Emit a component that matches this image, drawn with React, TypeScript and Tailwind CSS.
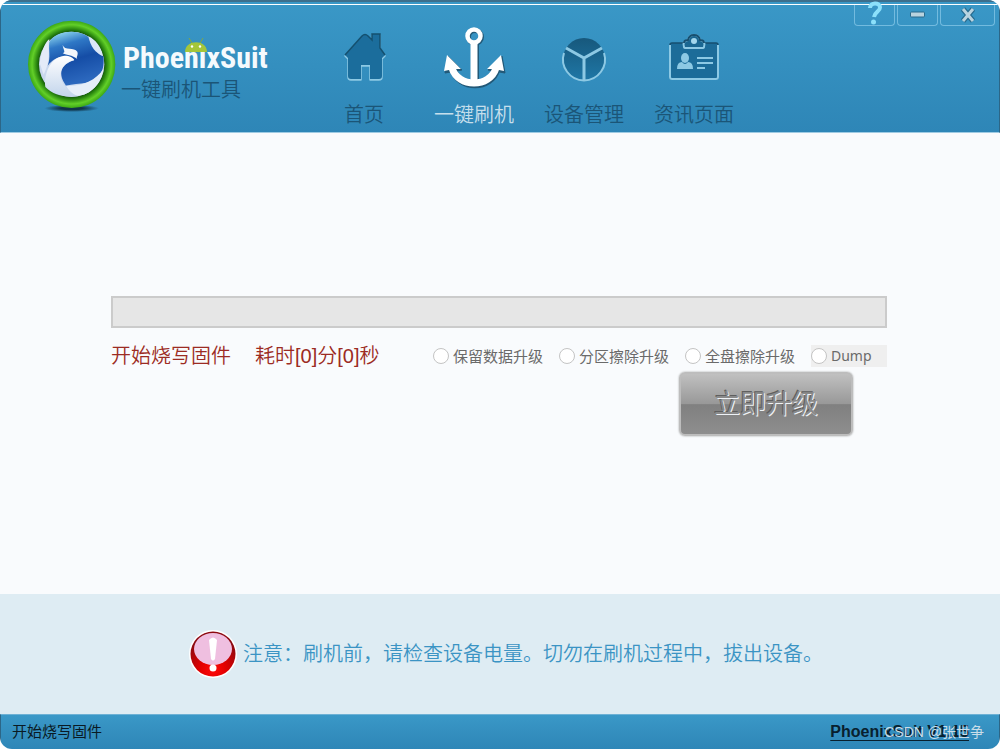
import { useState } from "react";
import type { ReactNode } from "react";

const navItems = [
  { id: "home", label: "首页", icon: <HomeIcon /> },
  { id: "flash", label: "一键刷机", icon: <AnchorIcon /> },
  { id: "device", label: "设备管理", icon: <DeviceIcon /> },
  { id: "news", label: "资讯页面", icon: <NewsIcon /> },
];

const modes = [
  { id: "keep", label: "保留数据升级" },
  { id: "partition", label: "分区擦除升级" },
  { id: "full", label: "全盘擦除升级" },
];

export default function App() {
  const [page, setPage] = useState("flash");
  const [mode, setMode] = useState("");

  return (
    <div className="flex min-h-screen flex-col overflow-hidden rounded-xl bg-[#f9fbfd] font-['Liberation_Sans','Noto_Sans_CJK_SC',sans-serif]">
      <header className="border-x border-b border-x-[#2c6687] border-b-[#9fcbe3] bg-linear-to-b from-[#3a98c7] to-[#2e86b7]">
        <div className="h-[5px] border-t-2 border-b border-t-[#3d6f8c] border-b-white" />
        <div className="flex items-start pl-[26px] pr-1">
          <div className="flex w-[297px] shrink-0 pt-[13px]">
            <LogoIcon />
            <div className="pl-1 pt-5">
              <div className="relative w-fit">
                <h1 className="pl-[2px] font-['Roboto_Condensed','Liberation_Sans_Narrow',sans-serif] text-[30px] font-bold leading-[40px] text-[#f5fafd]">
                  PhoenixSuit
                </h1>
                <AndroidIcon />
              </div>
              <p className="text-[20px] font-[350] leading-6 text-[#1b5577]">
                一键刷机工具
              </p>
            </div>
          </div>

          <nav className="flex gap-[30px] pb-1 pt-[21px]">
            {navItems.map((item) => (
              <button
                key={item.id}
                onClick={() => setPage(item.id)}
                className={`flex w-20 flex-col items-center gap-3 text-[20px] font-[350] leading-[26px] ${
                  page === item.id ? "text-[#c6dfec]" : "text-[#1b5577]"
                }`}
              >
                {item.icon}
                {item.label}
              </button>
            ))}
          </nav>

          <div className="ml-auto flex gap-[2px]">
            <WindowButton label="帮助" className="w-[41px]">
              <svg viewBox="0 0 16 24" className="absolute bottom-0 h-6 w-4" fill="none">
                <path d="M3 7 C3 1 13 1 13 6.500 C13 10.500 8 10.500 7 16" stroke="#8be0fa" strokeWidth="4" />
                <circle cx="6.500" cy="21" r="2.500" fill="#8be0fa" />
              </svg>
            </WindowButton>
            <WindowButton label="最小化" className="w-[41px]">
              <svg viewBox="0 0 18 8" className="h-2 w-[18px]">
                <rect x="1.500" y="1" width="14" height="5" rx="1" fill="#b9d3df" stroke="#286b8e" />
              </svg>
            </WindowButton>
            <WindowButton label="关闭" className="w-[55px]">
              <svg viewBox="0 0 18 18" className="h-[18px] w-[18px]" fill="none">
                <path d="M4 3 L14 15 M14 3 L4 15" stroke="#286b8e" strokeWidth="5.500" />
                <path d="M4 3 L14 15 M14 3 L4 15" stroke="#b9d3df" strokeWidth="3" />
              </svg>
            </WindowButton>
          </div>
        </div>
      </header>

      <main className="flex flex-1 flex-col justify-center pl-[111px] pr-[113px] pt-[5px]">
        <div
          role="progressbar"
          aria-label="升级进度"
          aria-valuenow={0}
          className="h-8 border-2 border-[#cbcbcb] bg-[#e6e6e6]"
        />
        <div className="mt-4 flex h-6 items-center whitespace-nowrap">
          <p className="flex gap-6 text-[20px] font-[350] text-[#9c2b23]">
            <span>开始烧写固件</span>
            <span>耗时[0]分[0]秒</span>
          </p>
          <div className="ml-auto flex items-center gap-4 text-[15px] text-[#6a6a6a]">
            {modes.map((m) => (
              <ModeOption key={m.id} {...m} value={mode} onSelect={setMode} />
            ))}
            <div className="w-[76px] bg-[#efefef] text-[14px]">
              <ModeOption id="dump" label="Dump" value={mode} onSelect={setMode} />
            </div>
          </div>
        </div>
        <button className="mr-[34px] mt-1 h-16 w-[174px] self-end rounded-md border-2 border-[#bdbdbd] bg-[linear-gradient(#c0c0c0,#989898_50%,#808080_51%,#8e8e8e)] text-[26px] text-[#8a8a8a] shadow-[0_0_2px_#999] [text-shadow:1px_1px_0_#eef2f6,-1px_-1px_0_#5f5f5f]">
          立即升级
        </button>
      </main>

      <section className="flex h-[120px] items-center justify-center gap-[6px] bg-[#deecf3] pl-3">
        <WarningIcon />
        <p className="text-[20px] font-[350] text-[#3b94c4]">
          注意：刷机前，请检查设备电量。切勿在刷机过程中，拔出设备。
        </p>
      </section>

      <footer className="relative flex h-[35px] items-center justify-between border-x border-t border-x-[#2c6687] border-t-[#6db1d5] bg-linear-to-b from-[#3a98c7] to-[#2e86b7] pl-[11px] pr-[30px]">
        <span className="text-[15px] text-[#0a1a24]">开始烧写固件</span>
        <a href="#" className="text-[16px] font-bold text-[#08202e] underline underline-offset-3">
          PhoenixSuit V1.15
        </a>
        <span className="absolute right-[15px] text-[14px] text-[#c9dde8]">
          CSDN @张世争
        </span>
      </footer>
    </div>
  );
}

function ModeOption({ id, label, value, onSelect }: { id: string; label: string; value: string; onSelect: (id: string) => void }) {
  return (
    <label className="flex items-center gap-1 font-['Noto_Sans','Noto_Sans_CJK_SC',sans-serif] leading-[22px]">
      <input
        type="radio"
        name="mode"
        value={id}
        checked={value === id}
        onChange={() => onSelect(id)}
        className="h-4 w-4 appearance-none rounded-full border border-[#c4c4c4] bg-white checked:border-4 checked:border-[#3a98c7]"
      />
      {label}
    </label>
  );
}

function WindowButton({ label, className, children }: { label: string; className: string; children: ReactNode }) {
  return (
    <button
      aria-label={label}
      className={`relative flex h-[21px] items-center justify-center rounded-b border border-t-0 border-[#73bbdf] ${className}`}
    >
      {children}
    </button>
  );
}

function LogoIcon() {
  return (
    <svg viewBox="80 55 270 285" className="h-[95px] w-[90px] shrink-0">
      <defs>
        <radialGradient id="ring" cx="214" cy="194" r="132" gradientUnits="userSpaceOnUse">
          <stop offset="0.72" stopColor="#0d4a08" />
          <stop offset="0.8" stopColor="#2c8a10" />
          <stop offset="0.9" stopColor="#62cf28" />
          <stop offset="1" stopColor="#39a514" />
        </radialGradient>
        <linearGradient id="globe" x1="0" y1="0" x2="0.3" y2="1">
          <stop offset="0" stopColor="#a8f0fa" />
          <stop offset="0.3" stopColor="#2f78c6" />
          <stop offset="0.6" stopColor="#154da6" />
          <stop offset="1" stopColor="#2b67bd" />
        </linearGradient>
        <linearGradient id="wing" x1="0" y1="0" x2="0" y2="1">
          <stop offset="0" stopColor="#ffffff" />
          <stop offset="1" stopColor="#c3d5ec" />
        </linearGradient>
        <radialGradient id="shade">
          <stop offset="0.4" stopColor="#10344a" />
          <stop offset="1" stopColor="#10344a" stopOpacity="0" />
        </radialGradient>
      </defs>
      <ellipse cx="214" cy="326" rx="82" ry="11" fill="url(#shade)" />
      <circle cx="214" cy="194" r="131" fill="url(#ring)" />
      <circle cx="214" cy="194" r="98" fill="#c9d8ee" />
      <path
        d="M147 128 C165 88 255 84 277 128 C286 150 292 166 309 170 C314 210 300 240 258 249 C238 253 216 252 197 258 C172 222 180 195 222 182 C204 163 165 166 142 198 C152 172 144 152 147 128 Z"
        fill="url(#globe)"
      />
      <path
        d="M135 262 C130 222 150 172 193 168 C208 168 219 174 222 181 C188 188 174 216 184 242 C192 264 214 282 240 288 C200 296 160 288 135 262 Z"
        fill="url(#wing)"
      />
      <path
        d="M187 136 C192 154 222 142 231 156 C235 166 226 172 231 178 C218 166 194 166 187 160 C198 160 188 148 187 136 Z"
        fill="#f3f7fc"
      />
      <path d="M197 258 C240 262 285 245 309 208 C305 252 268 288 232 288 C214 282 204 270 197 258 Z" fill="#e6eef9" />
      <path d="M264 110 C270 140 286 162 307 168 C302 142 288 122 264 110 Z" fill="#dbe8f8" />
      <path d="M118 190 C124 150 136 126 147 118 C140 150 156 172 130 225 Z" fill="#e4ebf8" />
    </svg>
  );
}

function AndroidIcon() {
  return (
    <svg viewBox="0 0 24 15" className="absolute left-[63px] top-0 h-[15px] w-6">
      <path d="M1 14 C1 1 23 1 23 14 Z" fill="#a4c63a" />
      <path d="M5 0 L8 5 M19 0 L16 5" stroke="#7fa845" strokeWidth="1" />
      <circle cx="8" cy="8.500" r="1.200" fill="#fff" />
      <circle cx="16" cy="8.500" r="1.200" fill="#fff" />
    </svg>
  );
}

function HomeIcon() {
  const house =
    "M13 29 L30 10 Q33 7 36 10 L40 14 V8 H48 V22 L53 29 L50 32 V50 Q50 53 47 53 H38 V39 H29 V53 H19 Q16 53 16 50 V32 Z";
  return (
    <svg viewBox="0 0 64 64" className="h-16 w-16">
      <path d={house} transform="translate(0 1)" fill="#8dc9e4" stroke="#8dc9e4" strokeWidth="1.500" strokeLinejoin="round" />
      <path d={house} fill="#1b6d9c" />
      <path d="M13 29 L30 10 Q33 7 36 10 L40 14 V8 H48 V22 L53 29" fill="none" stroke="#14506f" strokeWidth="1.500" />
    </svg>
  );
}

function AnchorIcon() {
  return (
    <svg viewBox="0 0 64 64" className="h-16 w-16" fill="none">
      <g transform="translate(1 1)" stroke="#1f4c66" fill="#1f4c66" opacity="0.8">
        <circle cx="32" cy="10" r="6.500" strokeWidth="5" fill="none" />
        <path d="M32 17 V57" strokeWidth="8" />
        <path d="M10 42 C16 63 48 63 54 42" strokeWidth="7" fill="none" />
        <path d="M5 29 L19 43 L2 46 Z M59 29 L45 43 L62 46 Z" />
      </g>
      <circle cx="32" cy="10" r="6.500" stroke="#fff" strokeWidth="4.500" />
      <path d="M32 17 V58" stroke="#fff" strokeWidth="7" />
      <path d="M10 42 C16 62 48 62 54 42" stroke="#fff" strokeWidth="7" />
      <path d="M5 29 L19 43 L12 43 L2 45 Z M59 29 L45 43 L52 43 L62 45 Z" fill="#fff" />
    </svg>
  );
}

function DeviceIcon() {
  return (
    <svg viewBox="0 0 64 64" className="h-16 w-16">
      <defs>
        <linearGradient id="pie" x1="0" y1="0" x2="0" y2="1">
          <stop offset="0" stopColor="#17587c" />
          <stop offset="1" stopColor="#1f77a6" />
        </linearGradient>
      </defs>
      <circle cx="32" cy="33" r="21" fill="url(#pie)" />
      <path d="M12 27 A21 21 0 1 0 52 27" fill="none" stroke="#8dc9e4" strokeWidth="2" />
      <path d="M32 54 V32 M14 22 L32 32 L50 22" fill="none" stroke="#8dc9e4" strokeWidth="3" />
    </svg>
  );
}

function NewsIcon() {
  return (
    <svg viewBox="0 0 64 64" className="h-16 w-16">
      <rect x="8" y="17" width="48" height="36" rx="2" fill="#1c6c99" stroke="#164f70" strokeWidth="1.500" />
      <path d="M8 19 V51 Q8 53 10 53 H54 Q56 53 56 51 V19" fill="none" stroke="#8dc9e4" strokeWidth="2" />
      <path
        d="M22 21 Q20 15 26 14 Q27 9 32 9 Q37 9 38 14 Q44 15 42 21 Q42 22 40 22 H24 Q22 22 22 21 Z"
        fill="#1a6792"
        stroke="#8dc9e4"
        strokeWidth="2"
      />
      <path d="M22 17 Q22 14 26 14 Q27 9 32 9 Q37 9 38 14 Q42 14 42 17" fill="none" stroke="#164f70" strokeWidth="2" />
      <circle cx="32" cy="15" r="3" fill="#a3d6ec" />
      <ellipse cx="23" cy="32" rx="4" ry="5" fill="#8dc9e4" />
      <path d="M15 43 Q15 36 20 36 Q23 40 26 36 Q31 36 31 43 Z" fill="#8dc9e4" />
      <path d="M35 32 H51 M35 37 H51 M35 42 H43" stroke="#8dc9e4" strokeWidth="2" />
    </svg>
  );
}

function WarningIcon() {
  return (
    <svg viewBox="0 0 48 48" className="h-12 w-12 shrink-0">
      <defs>
        <radialGradient id="ball" cx="0.5" cy="0.85" r="0.7">
          <stop offset="0" stopColor="#ff0a0a" />
          <stop offset="0.4" stopColor="#e30000" />
          <stop offset="1" stopColor="#8c0a10" />
        </radialGradient>
      </defs>
      <circle cx="24" cy="24" r="24" fill="#fff" />
      <circle cx="24" cy="24" r="22.500" fill="url(#ball)" />
      <ellipse cx="24" cy="19" rx="19" ry="16" fill="#efbfe0" />
      <path d="M20 10 Q24 5 28 10 L26 29 Q24 32 22 29 Z" fill="#fff" />
      <circle cx="24" cy="38" r="3.500" fill="#fff" />
    </svg>
  );
}
